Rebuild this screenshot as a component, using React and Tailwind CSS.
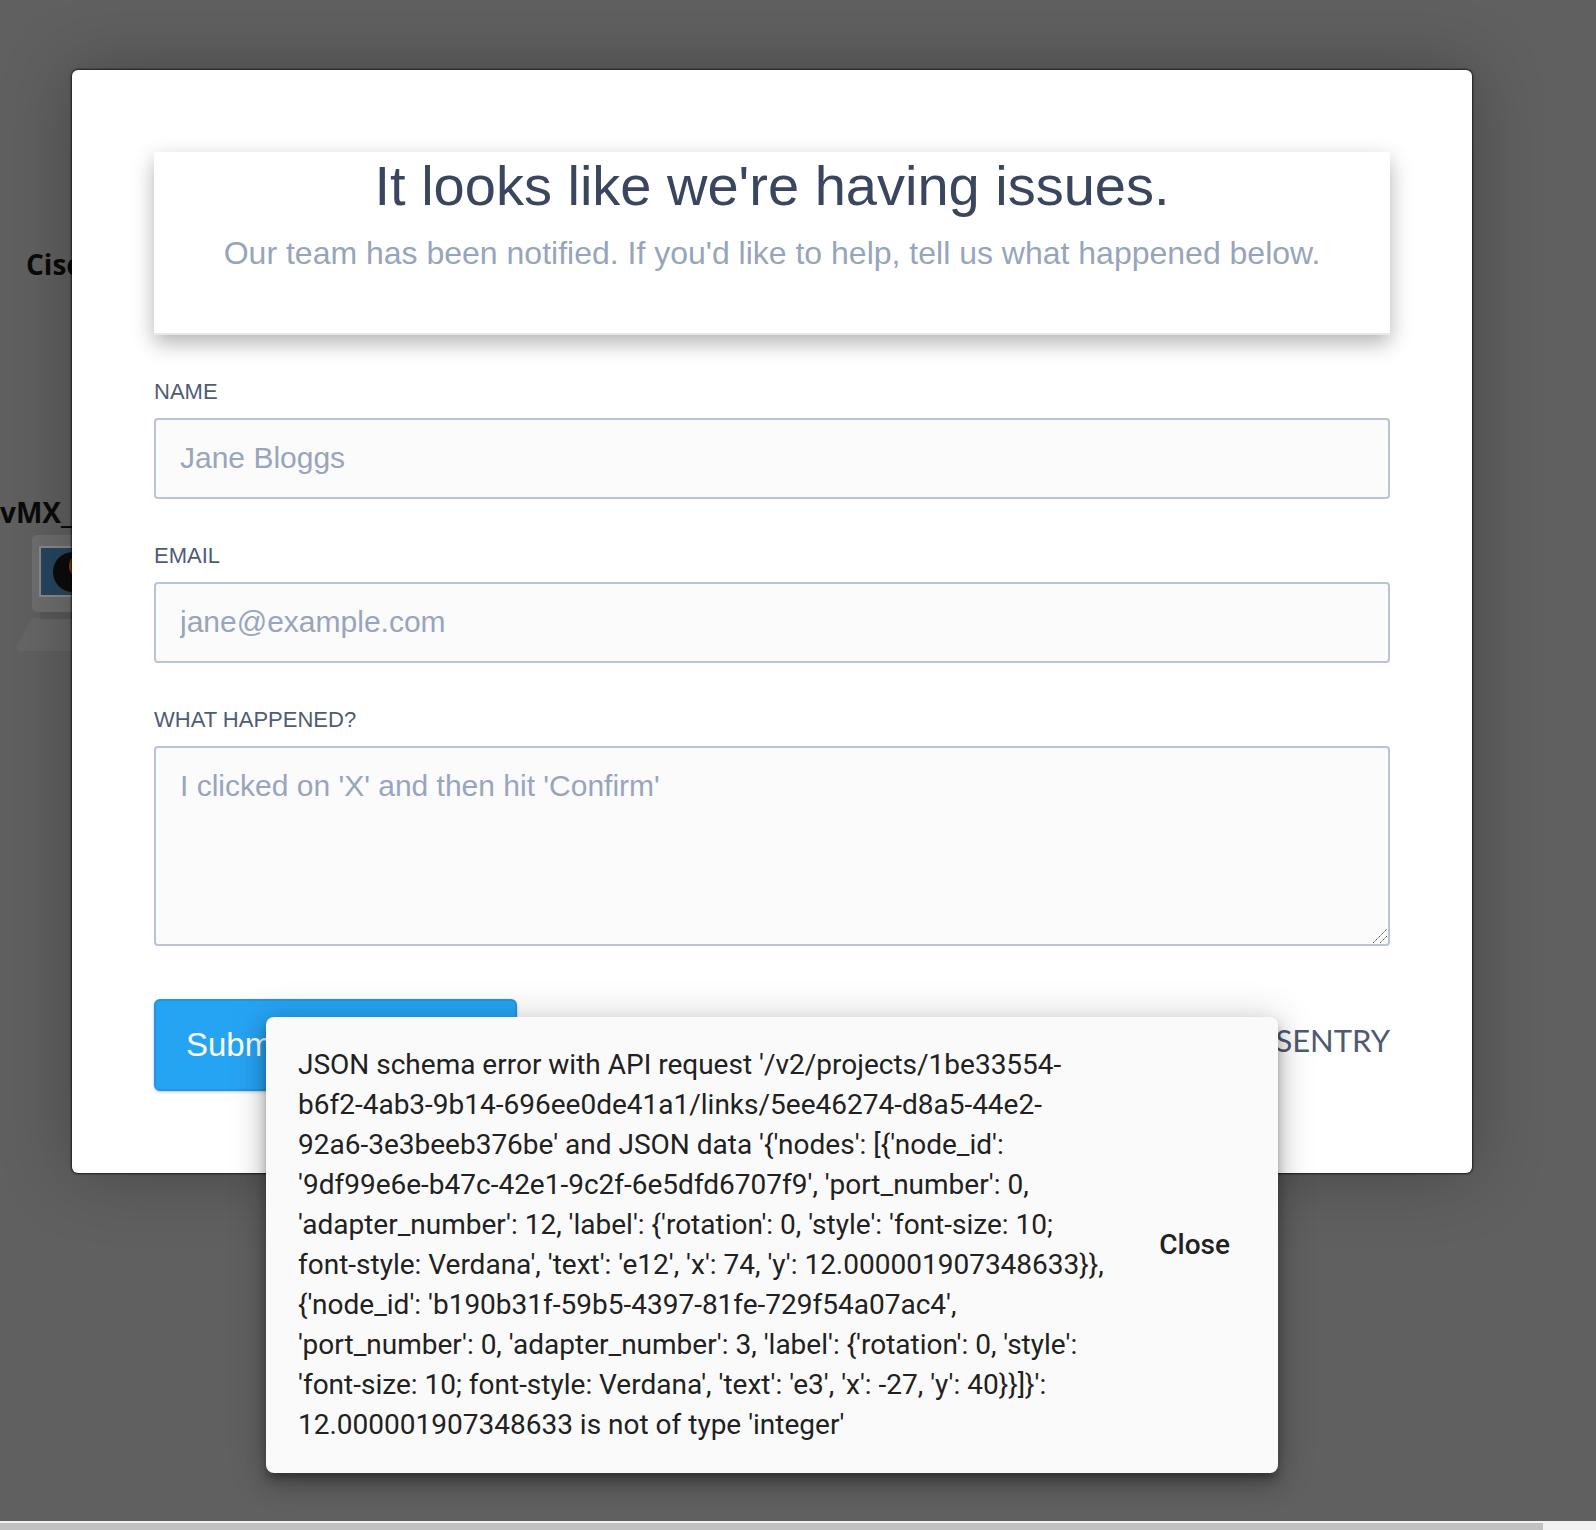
const font = "font-['Liberation_Sans',Arial,sans-serif]";

function Field({ label, placeholder, big }) {
  return (
    <div className="mb-[43px]">
      <label className="block text-[22px] leading-[28px] mb-[12px] uppercase text-[#4f5c75]">{label}</label>
      {big ? (
        <div className="relative">
          <textarea
            placeholder={placeholder}
            className="block w-full h-[200px] px-[24px] py-[18px] text-[30px] leading-[40px] resize-none bg-[#fbfbfb] border-2 border-[#b9c3da] rounded-[4px] placeholder:text-[#98a5bc] outline-none"
          />
          {/* resize handle */}
          <svg className="absolute right-[2px] bottom-[2px]" width="17" height="17" viewBox="0 0 17 17">
            <path d="M2 16 L16 2 M9 16 L16 9" stroke="#555" strokeWidth="1" strokeDasharray="1.5 0.6" fill="none" />
          </svg>
        </div>
      ) : (
        <input
          placeholder={placeholder}
          className="block w-full h-[81px] px-[24px] pb-[2px] text-[30px] bg-[#fbfbfb] border-2 border-[#b9c3da] rounded-[4px] placeholder:text-[#98a5bc] outline-none"
        />
      )}
    </div>
  );
}

function Desktop() {
  return (
    <>
      <div className="absolute left-[26px] top-[244px] font-['Open_Sans',sans-serif] font-bold text-[28px] leading-[40px] text-[#0a0a0a]">Cisco</div>
      <div className="absolute left-0 top-[492px] font-['Open_Sans',sans-serif] font-bold text-[28px] leading-[40px] text-[#0a0a0a]">vMX_1</div>
      <svg className="absolute left-[14px] top-[533px]" width="70" height="122" viewBox="0 0 70 122">
        <path d="M19 85 H70 V118 H5 Q1 117 3 113 L15 89 Q16 85 19 85 Z" fill="#666666" />
        <rect x="26" y="79" width="44" height="7" fill="#585858" />
        <rect x="18" y="2" width="52" height="77" rx="5" fill="#6e6e6e" />
        <rect x="25" y="13" width="45" height="51" fill="#8a8a8a" />
        <rect x="27" y="15" width="43" height="47" fill="#27455f" />
        <circle cx="59" cy="39" r="20" fill="#0c0c0c" />
        <circle cx="68" cy="33" r="13" fill="#8a4300" />
      </svg>
    </>
  );
}

export default function App() {
  return (
    <div className={`h-screen w-full flex flex-col overflow-hidden ${font}`}>
      <div className="relative flex-1 min-h-0 bg-[#606060] pt-[70px] pl-[72px]">
        <Desktop />
        {/* Feedback dialog */}
        <div className="relative w-[1400px] h-[1103px] bg-white rounded-[6px] pt-[82px] px-[82px] shadow-[0_0_2px_1px_rgba(0,0,0,0.65),0_0_70px_rgba(0,0,0,0.28)]">
          <div className="h-[183px] text-center bg-white border-b-2 border-[#e6e8ec] shadow-[0_8px_20px_rgba(0,0,0,0.3)]">
            <h1 className="text-[56px] leading-[67px] text-[#3a4660]">It looks like we're having issues.</h1>
            <p className="mt-[16px] text-[32px] leading-[36px] text-[#97a5bc]">Our team has been notified. If you'd like to help, tell us what happened below.</p>
          </div>
          <div className="pt-[43px]">
            <Field label="Name" placeholder="Jane Bloggs" />
            <Field label="Email" placeholder="jane@example.com" />
            <Field label="What happened?" placeholder="I clicked on 'X' and then hit 'Confirm'" big />
          </div>
          <div className="flex items-start justify-between mt-[12px]">
            <button className="w-[363px] h-[92px] mt-[10px] px-[30px] overflow-hidden whitespace-nowrap text-left text-[33px] text-white bg-[#26a4f4] rounded-[6px] border-2 border-[#1f96e6] shadow-[0_1px_3px_rgba(0,0,0,0.25)]">Submit Crash Report</button>
            <span className="mt-[31px] font-['Lato',sans-serif] text-[31px] leading-[40px] text-[#505a70]">SENTRY</span>
          </div>
        </div>

        {/* Error snackbar */}
        <div className="absolute left-[266px] top-[1017px] w-[1012px] h-[456px] flex items-center bg-[#fafafa] rounded-[8px] pl-[32px] pr-[48px] font-['Roboto',sans-serif] shadow-[0_6px_10px_-2px_rgba(0,0,0,0.35),0_12px_20px_2px_rgba(0,0,0,0.16),0_2px_36px_4px_rgba(0,0,0,0.16)]">
          <div className="w-[812px] shrink-0 text-[28px] leading-[40px] text-[#212121]">
            JSON schema error with API request '/v2/projects/1be33554-b6f2-4ab3-9b14-696ee0de41a1/links/5ee46274-d8a5-44e2-92a6-3e3beeb376be' and JSON data '{"{"}'nodes': [{"{"}'node_id': '9df99e6e-b47c-42e1-9c2f-6e5dfd6707f9', 'port_number': 0, 'adapter_number': 12, 'label': {"{"}'rotation': 0, 'style': 'font-size: 10; font-style: Verdana', 'text': 'e12', 'x': 74, 'y': 12.000001907348633{"}}"}, {"{"}'node_id': 'b190b31f-59b5-4397-81fe-729f54a07ac4', 'port_number': 0, 'adapter_number': 3, 'label': {"{"}'rotation': 0, 'style': 'font-size: 10; font-style: Verdana', 'text': 'e3', 'x': -27, 'y': 40{"}}"}]{"}"}': 12.000001907348633 is not of type 'integer'
          </div>
          <button className="ml-auto text-[28px] font-medium text-[#212121]">Close</button>
        </div>
      </div>

      {/* Horizontal scrollbar */}
      <div className="h-[9px] shrink-0 bg-[#f1f1f1] pt-[2px]">
        <div className="h-[7px] w-[1543px] bg-[#c1c1c1]" />
      </div>
    </div>
  );
}
